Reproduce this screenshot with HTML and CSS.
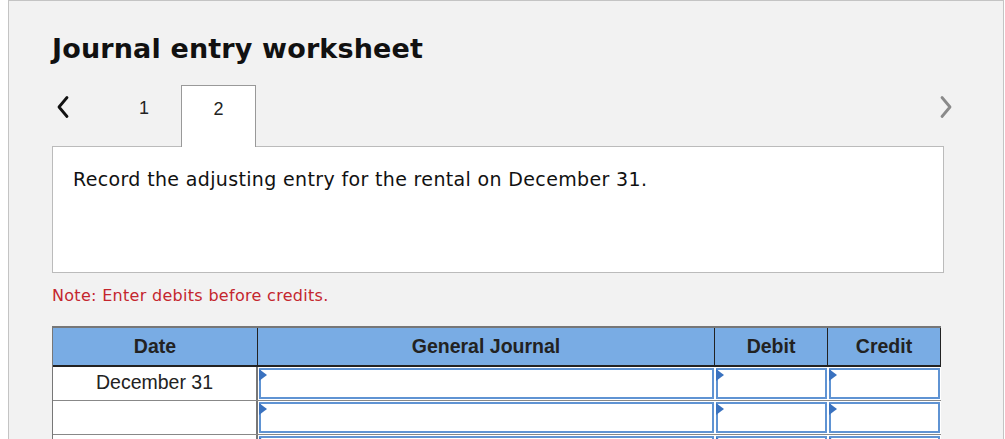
FILE: index.html
```html
<!DOCTYPE html>
<html>
<head>
<meta charset="utf-8">
<link rel="stylesheet" href="styles.css">
</head>
<body>
<div class="sheet">
  <h1 class="title">Journal entry worksheet</h1>
  <div class="tabs">
    <span class="nav prev"><svg width="16" height="24" viewBox="0 0 16 24"><path d="M12 2.5 L4 12 L12 21.5" fill="none" stroke="#111" stroke-width="2.8" stroke-linecap="round" stroke-linejoin="round"/></svg></span>
    <span class="tab tab-first">1</span>
    <span class="tab active">2</span>
    <span class="spacer"></span>
    <span class="nav next"><svg width="16" height="24" viewBox="0 0 16 24"><path d="M4 2.5 L12 12 L4 21.5" fill="none" stroke="#8a8a8a" stroke-width="2.8" stroke-linecap="round" stroke-linejoin="round"/></svg></span>
  </div>
  <div class="question">Record the adjusting entry for the rental on December 31.</div>
  <p class="note">Note: Enter debits before credits.</p>
  <div class="journal">
    <div class="row head">
      <div class="cell c-date">Date</div>
      <div class="cell c-gj">General Journal</div>
      <div class="cell c-num">Debit</div>
      <div class="cell c-num last">Credit</div>
    </div>
    <div class="row">
      <div class="cell c-date date">December 31</div>
      <div class="cell c-gj inp"><div class="box"></div></div>
      <div class="cell c-num inp"><div class="box"></div></div>
      <div class="cell c-num inp last"><div class="box"></div></div>
    </div>
    <div class="row">
      <div class="cell c-date date"></div>
      <div class="cell c-gj inp"><div class="box"></div></div>
      <div class="cell c-num inp"><div class="box"></div></div>
      <div class="cell c-num inp last"><div class="box"></div></div>
    </div>
    <div class="row">
      <div class="cell c-date date"></div>
      <div class="cell c-gj inp"><div class="box"></div></div>
      <div class="cell c-num inp"><div class="box"></div></div>
      <div class="cell c-num inp last"><div class="box"></div></div>
    </div>
  </div>
</div>
</body>
</html>
```

FILE: styles.css
```css
html, body { margin: 0; padding: 0; background: #fff; overflow: hidden; }
body { height: 439px; }
.sheet {
  margin-left: 8px;
  width: 996px;
  height: 460px;
  background: #f2f2f2;
  border: 1px solid #c4c4c4;
  border-bottom: none;
  box-sizing: border-box;
  padding: 0 0 0 43px;
}
.title {
  margin: 0;
  padding-top: 31px;
  height: 33px;
  font-family: "DejaVu Sans", Verdana, sans-serif;
  font-weight: bold;
  font-size: 27px;
  letter-spacing: 0.15px;
  line-height: 33px;
  color: #111;
}
.tabs {
  display: flex;
  align-items: stretch;
  margin-top: 20px;
  height: 61px;
  width: 908px;
  font-family: "Liberation Sans", Arial, sans-serif;
  font-size: 18px;
  color: #222;
}
.nav { display: flex; align-items: flex-start; padding-top: 10px; }
.prev { width: 22px; padding-left: 3px; }
.tab {
  width: 75px;
  display: flex;
  justify-content: center;
  padding-top: 13px;
  box-sizing: border-box;
}
.tab.tab-first { width: 104px; justify-content: flex-end; padding-right: 32px; }
.tab.active {
  background: #fff;
  border: 1px solid #999;
  border-bottom: none;
  position: relative;
  z-index: 2;
  margin-bottom: -1px;
}
.spacer { flex: 1; }
.next { width: 22px; }
.question {
  width: 892px;
  height: 127px;
  box-sizing: border-box;
  background: #fff;
  border: 1px solid #bbb;
  padding: 21px 0 0 20px;
  font-family: "DejaVu Sans", Verdana, sans-serif;
  font-size: 19px;
  letter-spacing: 0.35px;
  color: #111;
  position: relative;
  z-index: 1;
}
.note {
  margin: 14px 0 0 0;
  font-family: "DejaVu Sans", Verdana, sans-serif;
  font-size: 16px;
  letter-spacing: 0.3px;
  color: #c4262e;
  line-height: 18px;
}
.journal {
  margin-top: 21px;
  width: 889px;
  font-family: "Liberation Sans", Arial, sans-serif;
  border-top: 2px solid #777;
  border-left: 1px solid #777;
  box-sizing: border-box;
}
.row { display: flex; height: 34px; border-bottom: 1px solid #888; box-sizing: border-box; }
.row.head { height: 39px; border-bottom: 2px solid #222; background: #79ace4; }
.cell { box-sizing: border-box; }
.c-date { width: 205px; }
.c-gj { width: 457px; }
.c-num { width: 113px; }
.head .cell {
  display: flex;
  align-items: center;
  justify-content: center;
  font-size: 19.5px;
  font-weight: bold;
  color: #222;
  border-right: 1px solid #222;
  padding-bottom: 1px;
}
.date {
  display: flex;
  align-items: center;
  justify-content: center;
  font-size: 19.5px;
  color: #222;
  background: #fff;
  border-right: 2px solid #777;
  padding-bottom: 3px;
}
.inp { padding: 1px; background: #fff; }
.box {
  height: 31px;
  box-sizing: border-box;
  border: 2px solid #5f93d3;
  background: #fff;
  position: relative;
}
.box::before {
  content: "";
  position: absolute;
  left: -2px;
  top: -1px;
  border-top: 6px solid transparent;
  border-bottom: 6px solid transparent;
  border-left: 8px solid #3a72bf;
}
```
